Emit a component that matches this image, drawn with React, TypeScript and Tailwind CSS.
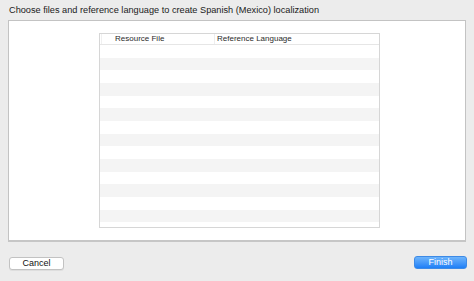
import React from "react";

export default function App() {
  const rows = Array.from({ length: 15 }, (_, i) => i);
  return (
    <div className="w-[474px] h-[281px] bg-[#ececec] flex flex-col font-['Liberation_Sans',Arial,sans-serif] overflow-hidden">
      <div className="h-[20px] pl-[9px] pt-[4px] text-[9.2px] leading-[12px] text-[#1a1a1a] whitespace-nowrap">
        Choose files and reference language to create Spanish (Mexico) localization
      </div>
      <div className="mx-[8px] h-[222px] bg-white border border-[#c3c3c3] border-b-2 border-b-[#c6c6c6] flex pt-[12px] pl-[90px]">
        <div className="w-[281px] h-[195px] border border-[#d6d6d6] flex flex-col overflow-hidden">
          <div className="h-[11px] shrink-0 flex border-b border-[#e6e6e6] text-[8px] leading-[10px] text-[#2a2a2a]">
            <div className="w-[2px] border-r border-[#f0f0f0]" />
            <div className="w-[113px] pl-[13px] border-r border-[#eeeeee] whitespace-nowrap">Resource File</div>
            <div className="pl-[2px] whitespace-nowrap">Reference Language</div>
          </div>
          {rows.map((i) => (
            <div
              key={i}
              className={
                i % 2 === 0
                  ? "h-[12.67px] shrink-0 bg-white"
                  : "h-[12.67px] shrink-0 bg-[#f4f4f4]"
              }
            />
          ))}
        </div>
      </div>
      <div className="flex justify-between pl-[9px] pr-[7px] pt-[14px]">
        <button className="w-[55px] h-[13px] mt-[1px] bg-white border border-[#c2c2c2] rounded-[3px] shadow-[0_1px_0_rgba(0,0,0,0.06)] text-[9px] leading-[11px] text-[#111]">
          Cancel
        </button>
        <button className="w-[53px] h-[13px] bg-gradient-to-b from-[#6db4fb] to-[#1c7ff7] border border-[#3d8ae6] rounded-[3px] text-[9px] leading-[11px] text-white">
          Finish
        </button>
      </div>
    </div>
  );
}
